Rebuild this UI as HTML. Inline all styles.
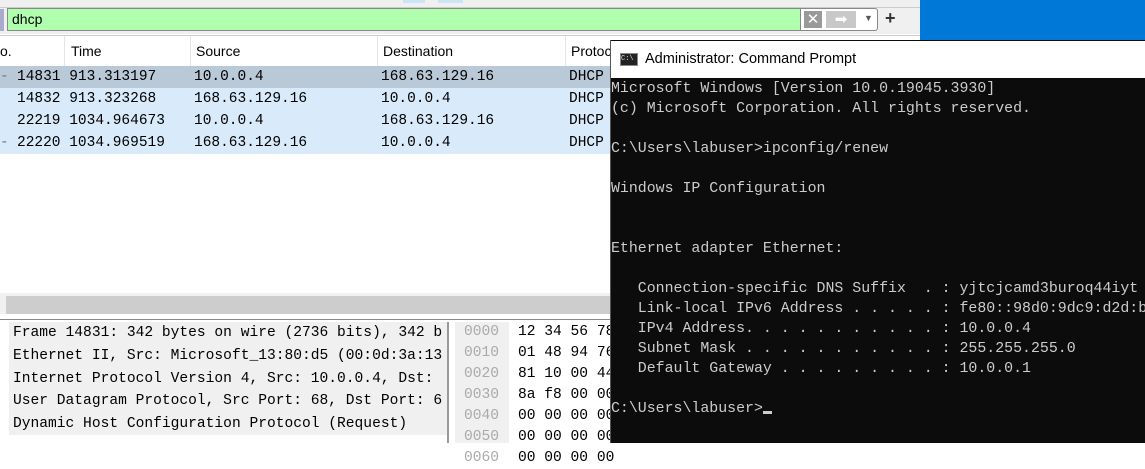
<!DOCTYPE html>
<html><head><style>
*{margin:0;padding:0;box-sizing:border-box}
body{width:1145px;height:443px;overflow:hidden;position:relative;background:#fff;font-family:"Liberation Sans",sans-serif}
.a{position:absolute}
.mono{font-family:"Liberation Mono",monospace;white-space:pre}
.row{position:absolute;left:0;width:610px;height:22px;font-size:14.5px;line-height:22px;color:#000}
.row span{position:absolute}
.cmd{position:absolute;left:611px;font-family:"Liberation Mono",monospace;white-space:pre;font-size:14.9px;color:#ccc;line-height:20px}
.det{position:absolute;left:13px;font-size:14.6px;line-height:22px}
.hx{position:absolute;font-size:14.6px;line-height:21px}
</style></head><body>
<div class="a" style="left:0;top:0;width:920px;height:8px;background:#f0f0f0;border-bottom:1px solid #ccc"></div>
<div class="a" style="left:403px;top:0;width:22px;height:3px;background:#cce4f7"></div>
<div class="a" style="left:438px;top:0;width:25px;height:3px;background:#cce4f7"></div>
<div class="a" style="left:0;top:8px;width:920px;height:26px;background:#f0f0f0"></div>
<div class="a" style="left:0;top:9px;width:4px;height:22px;background:#aac"></div>
<div class="a" style="left:7px;top:8px;width:794px;height:23px;background:#afffaf;border:1px solid #888;font-size:14px;line-height:21px;padding-left:4px">dhcp</div>
<div class="a" style="left:801px;top:8px;width:77px;height:23px;background:#fff;border:1px solid #888;border-left:none;border-radius:0 3px 3px 0"></div>
<div class="a" style="left:804px;top:11px;width:18px;height:17px;background:#999;color:#fff;font-size:15px;line-height:17px;text-align:center">✕</div>
<div class="a" style="left:826px;top:11px;width:30px;height:17px;background:#c8c8c8;color:#fff;font-size:15px;line-height:17px;text-align:center">➡</div>
<div class="a" style="left:864px;top:13px;font-size:9px;color:#555">▼</div>
<div class="a" style="left:885px;top:8px;font-size:18px;font-weight:bold;color:#333">+</div>
<div class="a" style="left:920px;top:0;width:225px;height:40px;background:#0078d7"></div>
<div class="a" style="left:0;top:35px;width:920px;height:31px;background:#fff;border-top:1px solid #ccc;font-size:14px;line-height:30px">
<span class="a" style="left:0">o.</span><span class="a" style="left:64px;top:0;height:30px;border-left:1px solid #e5e5e5;padding-left:6px">Time</span><span class="a" style="left:190px;height:30px;border-left:1px solid #e5e5e5;padding-left:5px">Source</span><span class="a" style="left:377px;height:30px;border-left:1px solid #e5e5e5;padding-left:5px">Destination</span><span class="a" style="left:565px;height:30px;border-left:1px solid #e5e5e5;padding-left:5px">Protocol</span></div>
<div class="row mono" style="top:66px;background:#b9c9d7"><span style="left:0;color:#777">-</span><span style="left:17px">14831 913.313197</span><span style="left:194px">10.0.0.4</span><span style="left:381px">168.63.129.16</span><span style="left:569px">DHCP</span></div>
<div class="row mono" style="top:88px;background:#d9ebfb"><span style="left:17px">14832 913.323268</span><span style="left:194px">168.63.129.16</span><span style="left:381px">10.0.0.4</span><span style="left:569px">DHCP</span></div>
<div class="row mono" style="top:110px;background:#d9ebfb"><span style="left:17px">22219 1034.964673</span><span style="left:194px">10.0.0.4</span><span style="left:381px">168.63.129.16</span><span style="left:569px">DHCP</span></div>
<div class="row mono" style="top:132px;background:#d9ebfb"><span style="left:0;color:#777">-</span><span style="left:17px">22220 1034.969519</span><span style="left:194px">168.63.129.16</span><span style="left:381px">10.0.0.4</span><span style="left:569px">DHCP</span></div>
<div class="a" style="left:0;top:293px;width:610px;height:21px;background:#f0f0f0"></div>
<div class="a" style="left:6px;top:296px;width:604px;height:18px;background:#cdcdcd"></div>
<div class="a" style="left:0;top:319px;width:610px;height:1px;background:#888"></div>
<div class="a" style="left:0;top:320px;width:610px;height:123px;background:#fff"></div>
<div class="a" style="left:9px;top:322px;width:438px;height:113px;background:#f0f0f0"></div>
<div class="a" style="left:447px;top:322px;width:2px;height:121px;background:#999"></div>
<div class="a" style="left:455px;top:322px;width:54px;height:121px;background:#f0f0f0"></div>
<div class="a" style="left:9px;top:322px;width:438px;height:113px;overflow:hidden">
<div class="det mono" style="left:4px;top:0px">Frame 14831: 342 bytes on wire (2736 bits), 342 b</div>
<div class="det mono" style="left:4px;top:23px">Ethernet II, Src: Microsoft_13:80:d5 (00:0d:3a:13</div>
<div class="det mono" style="left:4px;top:46px">Internet Protocol Version 4, Src: 10.0.0.4, Dst: </div>
<div class="det mono" style="left:4px;top:68px">User Datagram Protocol, Src Port: 68, Dst Port: 6</div>
<div class="det mono" style="left:4px;top:91px">Dynamic Host Configuration Protocol (Request)</div>
</div>
<div class="hx mono" style="left:464px;top:322px;color:#aaa">0000
0010
0020
0030
0040
0050
0060</div>
<div class="hx mono" style="left:518px;top:322px">12 34 56 78
01 48 94 76
81 10 00 44
8a f8 00 00
00 00 00 00
00 00 00 00
00 00 00 00</div>
<div class="a" style="left:610px;top:40px;width:535px;height:403px;background:#0c0c0c;border-left:1px solid #555"></div>
<div class="a" style="left:611px;top:41px;width:534px;height:37px;background:#fff;font-size:14.5px;line-height:37px;padding-left:34px;color:#000">Administrator: Command Prompt</div>
<div class="a" style="left:620px;top:53px;width:18px;height:13px;background:#222;border:1px solid #888;color:#ddd;font-size:7px;line-height:11px;font-family:'Liberation Mono',monospace">C:\</div>
<div class="cmd" style="top:79px">Microsoft Windows [Version 10.0.19045.3930]
(c) Microsoft Corporation. All rights reserved.

C:\Users\labuser>ipconfig/renew

Windows IP Configuration


Ethernet adapter Ethernet:

   Connection-specific DNS Suffix  . : yjtcjcamd3buroq44iyt
   Link-local IPv6 Address . . . . . : fe80::98d0:9dc9:d2d:b
   IPv4 Address. . . . . . . . . . . : 10.0.0.4
   Subnet Mask . . . . . . . . . . . : 255.255.255.0
   Default Gateway . . . . . . . . . : 10.0.0.1

C:\Users\labuser><span style="display:inline-block;width:9px;height:3px;background:#ccc;vertical-align:-2px"></span></div>
</body></html>
